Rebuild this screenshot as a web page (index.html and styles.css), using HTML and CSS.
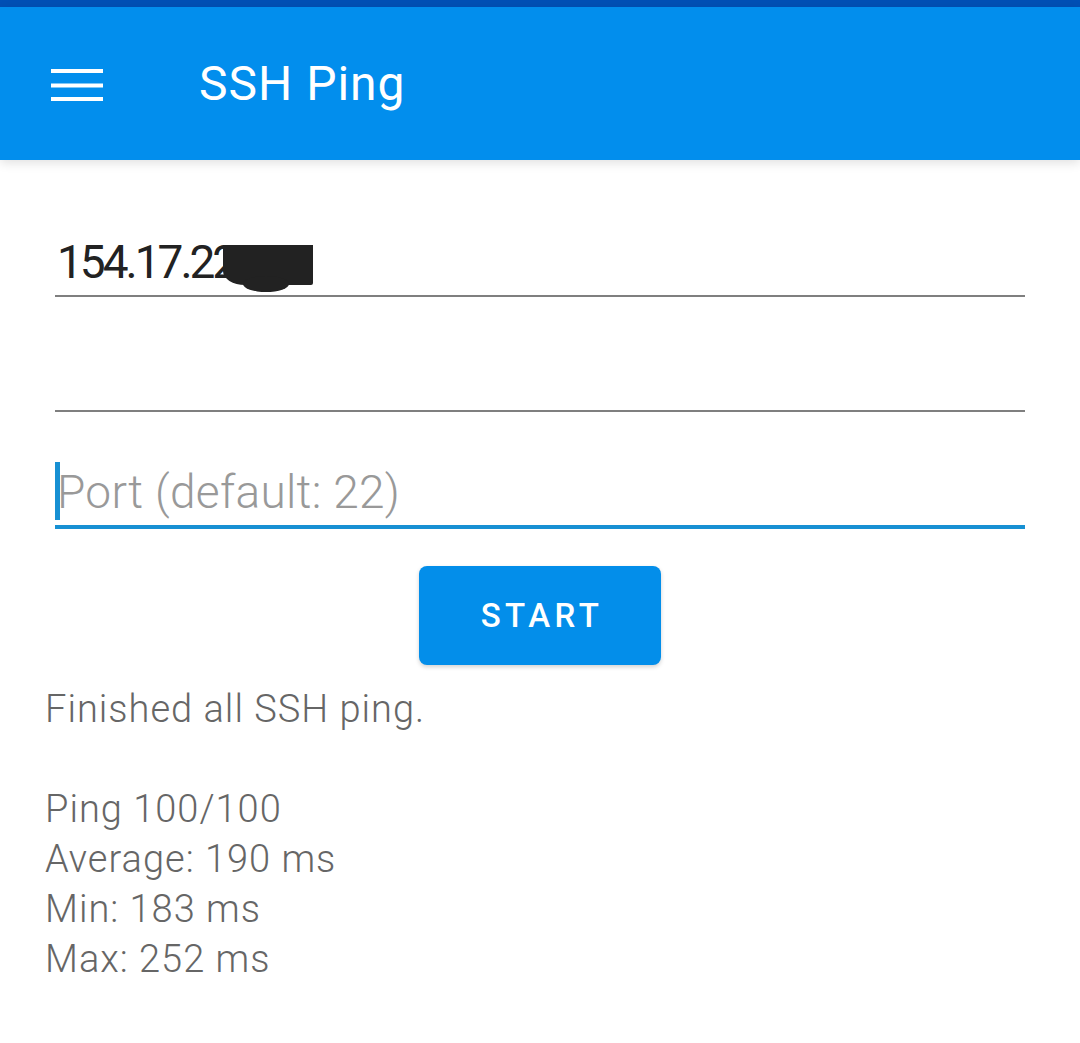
FILE: index.html
```html
<!DOCTYPE html>
<html lang="en">
<head>
<meta charset="utf-8">
<title>SSH Ping</title>
<link rel="stylesheet" href="styles.css">
</head>
<body>
<div class="statusbar"></div>
<header class="appbar">
  <svg class="menu" width="52" height="34" viewBox="0 0 52 34" aria-hidden="true">
    <rect x="0" y="0" width="52" height="4" fill="#fff"/>
    <rect x="0" y="14.5" width="52" height="4" fill="#fff"/>
    <rect x="0" y="28" width="52" height="4" fill="#fff"/>
  </svg>
  <h1 class="title">SSH Ping</h1>
</header>
<main class="content">
  <div class="field">
    <span class="value">154.17.22</span>
    <span class="redact"></span>
  </div>
  <div class="field"></div>
  <div class="field focused">
    <span class="caret"></span>
    <span class="placeholder">Port (default: 22)</span>
  </div>
  <div class="actions">
    <button class="start">START</button>
  </div>
  <div class="results">Finished all SSH ping.

Ping 100/100
Average: 190 ms
Min: 183 ms
Max: 252 ms</div>
</main>
</body>
</html>
```

FILE: styles.css
```css
html, body {
  margin: 0;
  padding: 0;
  background: #ffffff;
  font-family: Roboto, "Noto Sans", sans-serif;
}

.statusbar {
  height: 7px;
  background: #0050b5;
}

.appbar {
  height: 153px;
  background: #028eed;
  display: flex;
  align-items: center;
  padding-left: 51px;
  gap: 96px;
  box-shadow: 0 3px 10px rgba(0, 0, 0, 0.12);
  position: relative;
}

.menu {
  display: block;
  margin-top: 4px;
}

.title {
  margin: 0;
  color: #ffffff;
  font-size: 48px;
  font-weight: 400;
  letter-spacing: 1px;
}

.content {
  padding: 74px 55px 0 45px;
}

.field {
  position: relative;
  margin-left: 10px;
  height: 56px;
  line-height: 56px;
  font-size: 46px;
  font-weight: 300;
  padding-bottom: 5px;
  border-bottom: 2px solid #7f7f7f;
  margin-bottom: 52px;
  color: #1e1e1e;
}

.field.focused {
  border-bottom: 4px solid #1790d3;
  margin-bottom: 37px;
}

.value {
  padding-left: 2px;
  font-weight: 400;
  color: #222222;
  letter-spacing: -3px;
}

.redact {
  position: absolute;
  left: 168px;
  top: 11px;
  width: 90px;
  height: 40px;
  background: #222222;
  border-radius: 0 0 2px 22px / 0 0 2px 14px;
}

.redact::after {
  content: "";
  position: absolute;
  left: 20px;
  bottom: -7px;
  width: 46px;
  height: 16px;
  background: #222222;
  border-radius: 50%;
}

.caret {
  position: absolute;
  left: 0;
  top: -2px;
  width: 5px;
  height: 58px;
  background: #1790d3;
}

.placeholder {
  color: #999999;
  padding-left: 2px;
  letter-spacing: 0.3px;
}

.actions {
  display: flex;
  justify-content: center;
  margin-left: -45px;
  margin-right: -55px;
}

.start {
  width: 242px;
  height: 99px;
  border: none;
  border-radius: 8px;
  background: #038eea;
  color: #ffffff;
  font-family: Roboto, "Noto Sans", sans-serif;
  font-size: 33px;
  font-weight: 500;
  letter-spacing: 4.5px;
  box-shadow: 0 2px 4px rgba(0, 0, 0, 0.18);
  padding: 0 0 0 4px;
}

.results {
  margin-top: 19px;
  white-space: pre-line;
  color: #666666;
  font-size: 38px;
  font-weight: 300;
  letter-spacing: 1px;
  line-height: 50px;
}
```
